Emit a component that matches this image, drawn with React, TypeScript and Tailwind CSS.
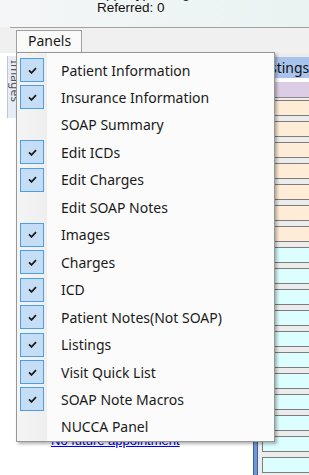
const ITEMS: [string, boolean][] = [
  ["Patient Information", true],
  ["Insurance Information", true],
  ["SOAP Summary", false],
  ["Edit ICDs", true],
  ["Edit Charges", true],
  ["Edit SOAP Notes", false],
  ["Images", true],
  ["Charges", true],
  ["ICD", true],
  ["Patient Notes(Not SOAP)", true],
  ["Listings", true],
  ["Visit Quick List", true],
  ["SOAP Note Macros", true],
  ["NUCCA Panel", false],
];

// listing rows behind the menu: 7 peach, then cyan to the bottom
const ROWS = Array.from({ length: 18 }, (_, i) => (i < 7 ? "peach" : "cyan"));

export default function App() {
  return (
    <div className="relative h-[475px] w-[309px] overflow-hidden bg-white font-['Noto_Sans',sans-serif]">
      <Header />

      <div className="h-[26px] bg-[#f0f0f0] pl-[10px]">
        <div className="h-full border-t border-[#a0a0a0] pl-[6px] pt-[2px]">
          <div className="h-[23px] w-[66px] border border-b-0 border-[#a0a0a0] bg-[#fafafa] pl-[11px] text-[14px] leading-[20px] text-[#1b1b1b]">
            Panels
          </div>
        </div>
      </div>

      <div className="flex h-[422px]">
        <div className="flex w-[253px] flex-col items-start bg-white">
          <div className="ml-[7px] mt-[3px] flex h-[62px] w-[12px] justify-end overflow-hidden border-l border-[#b7c6dc] bg-[#e6edf7] pt-[4px]">
            <span className="-mr-[3px] text-[12px] leading-[14px] text-[#555] [writing-mode:vertical-rl]">Images</span>
          </div>
          <a className="ml-[51px] mt-[315px] font-['Liberation_Sans',sans-serif] text-[13px] leading-[15px] text-[#0000ee] underline">
            No future appointment
          </a>
        </div>
        <div className="w-[5px] border-x border-[#3f5e9c] bg-[#7396d8]" />
        <div className="w-[4px] bg-[#ececec]" />
        <div className="w-[47px] bg-[#ececec] pt-[4px]">
          <div className="h-[21px] w-[60px] whitespace-nowrap bg-[#a9c4ec] indent-[-3px] text-[14px] leading-[21px] text-[#111]">
            Listings:
          </div>
          <div className="h-[4px] bg-white" />
          <div className="h-[16px] w-[60px] border-b border-[#8a8a8a] bg-[#dccde4]" />
          <div className="h-[2px]" />
          {ROWS.map((kind, i) => (
            <div
              key={i}
              className={`mb-[5px] h-[16px] w-[60px] border border-[#7c7c7c] ${kind === "peach" ? "bg-[#feecd6]" : "bg-[#dcfefe]"}`}
            />
          ))}
        </div>
      </div>

      <PanelsMenu />
    </div>
  );
}

function Header() {
  return (
    <div className="h-[27px] overflow-hidden bg-gradient-to-r from-[#f5f6f7] to-[#e8f3f2] pl-[97px] pt-[1px] font-['Liberation_Sans',sans-serif] text-[13.5px] leading-[14px] text-[#111]">
      <div className="-mt-[14px] whitespace-nowrap">Appt Type: Regular</div>
      <div className="whitespace-nowrap">Referred: 0</div>
    </div>
  );
}

function PanelsMenu() {
  return (
    <div className="absolute left-[16px] top-[52px] h-[390px] w-[259px] border border-[#979797] bg-[linear-gradient(to_right,#f5f5f5_0px,#eeeeee_30px,#fbfbfb_30px)] pt-[3.3px] shadow-[2px_2px_3px_rgba(0,0,0,0.3)]">
      {ITEMS.map(([label, checked]) => (
        <div key={label} className="flex h-[27.46px] items-center pl-[3px]">
          {checked ? (
            <span className="flex h-[24px] w-[24px] items-center justify-center border border-[#4b9fe6] bg-[#c5def5]">
              <svg width="9" height="7" viewBox="0 0 9 7" fill="none">
                <polyline points="1,3.4 3.5,5.9 8,1.1" stroke="#1a1a1a" strokeWidth="1.7" />
              </svg>
            </span>
          ) : (
            <span className="w-[24px]" />
          )}
          <span className="ml-[17px] text-[14px] text-[#1a1a1a]">{label}</span>
        </div>
      ))}
    </div>
  );
}
